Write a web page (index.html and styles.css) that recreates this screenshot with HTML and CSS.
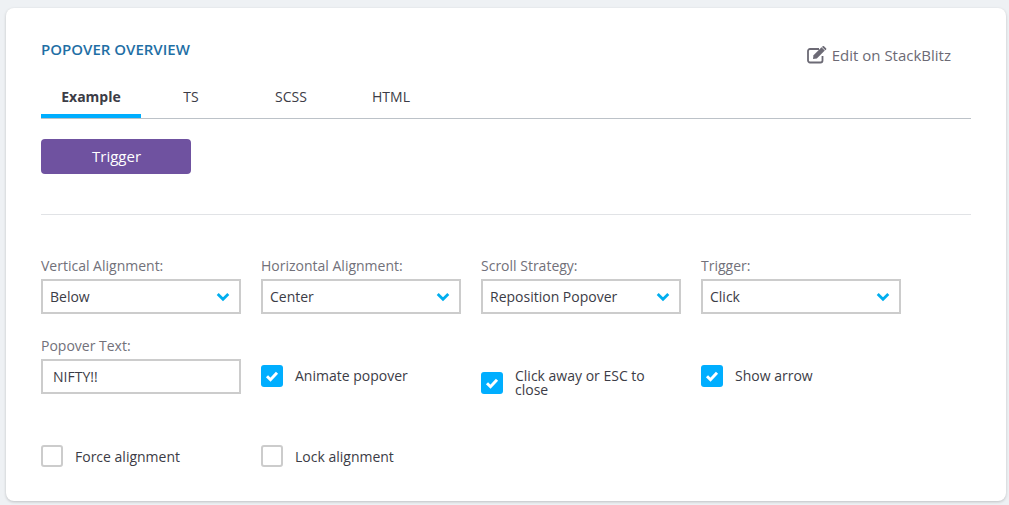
FILE: index.html
```html
<!DOCTYPE html>
<html lang="en">
<head>
<meta charset="utf-8">
<title>Popover Overview</title>
<link rel="stylesheet" href="styles.css">
</head>
<body>
<main class="card">
  <header class="head">
    <h2 class="title">POPOVER OVERVIEW</h2>
    <a class="edit">
      <svg class="edit-icon" viewBox="0 0 20 18" width="20" height="18" aria-hidden="true">
        <path d="M15.500 10V14.500a2 2 0 0 1-2 2H3a2 2 0 0 1-2-2V5a2 2 0 0 1 2-2h9" fill="none" stroke="#6c6a75" stroke-width="1.800"/>
        <path d="M6.500 9.200 14.500 1.200l3.300 3.300-8 8-3.800.500z" fill="#6c6a75"/>
        <path d="M15.600.3a1 1 0 0 1 1.400 0l2 2a1 1 0 0 1 0 1.400l-.6.600-3.400-3.400z" fill="#6c6a75"/>
      </svg>
      <span>Edit on StackBlitz</span>
    </a>
  </header>

  <nav class="tabs">
    <span class="tab active">Example</span>
    <span class="tab">TS</span>
    <span class="tab">SCSS</span>
    <span class="tab">HTML</span>
  </nav>

  <section class="demo">
    <button class="trigger" type="button">Trigger</button>
  </section>

  <section class="form">
    <div class="field">
      <label class="label">Vertical Alignment:</label>
      <div class="select">Below<svg class="chev" viewBox="0 0 14 10" width="14" height="10" aria-hidden="true"><path d="M1.700 2 7 7.300 12.300 2" fill="none" stroke="#00aeef" stroke-width="2.800"/></svg></div>
    </div>
    <div class="field">
      <label class="label">Horizontal Alignment:</label>
      <div class="select">Center<svg class="chev" viewBox="0 0 14 10" width="14" height="10" aria-hidden="true"><path d="M1.700 2 7 7.300 12.300 2" fill="none" stroke="#00aeef" stroke-width="2.800"/></svg></div>
    </div>
    <div class="field">
      <label class="label">Scroll Strategy:</label>
      <div class="select">Reposition Popover<svg class="chev" viewBox="0 0 14 10" width="14" height="10" aria-hidden="true"><path d="M1.700 2 7 7.300 12.300 2" fill="none" stroke="#00aeef" stroke-width="2.800"/></svg></div>
    </div>
    <div class="field">
      <label class="label">Trigger:</label>
      <div class="select">Click<svg class="chev" viewBox="0 0 14 10" width="14" height="10" aria-hidden="true"><path d="M1.700 2 7 7.300 12.300 2" fill="none" stroke="#00aeef" stroke-width="2.800"/></svg></div>
    </div>

    <div class="field">
      <label class="label">Popover Text:</label>
      <div class="input">NIFTY!!</div>
    </div>
    <div class="check-cell">
      <div class="check"><span class="box on"><svg viewBox="0 0 22 22" width="22" height="22" aria-hidden="true"><path d="M6 11.200 9.500 14.700 16 7.700" fill="none" stroke="#fff" stroke-width="3"/></svg></span><span class="check-text">Animate popover</span></div>
    </div>
    <div class="check-cell">
      <div class="check low"><span class="box on"><svg viewBox="0 0 22 22" width="22" height="22" aria-hidden="true"><path d="M6 11.200 9.500 14.700 16 7.700" fill="none" stroke="#fff" stroke-width="3"/></svg></span><span class="check-text">Click away or ESC to close</span></div>
    </div>
    <div class="check-cell">
      <div class="check"><span class="box on"><svg viewBox="0 0 22 22" width="22" height="22" aria-hidden="true"><path d="M6 11.200 9.500 14.700 16 7.700" fill="none" stroke="#fff" stroke-width="3"/></svg></span><span class="check-text">Show arrow</span></div>
    </div>

    <div class="check plain"><span class="box"></span><span class="check-text">Force alignment</span></div>
    <div class="check plain"><span class="box"></span><span class="check-text">Lock alignment</span></div>
  </section>
</main>
</body>
</html>
```

FILE: styles.css
```css
* { box-sizing: border-box; }

html, body { height: 100%; }

body {
  margin: 0;
  padding: 8px 3px 4px 6px;
  background: #eef1f4;
  font-family: "Open Sans", sans-serif;
  font-size: 14px;
  color: #3c3c46;
  overflow: hidden;
}

.card {
  width: 1000px;
  height: 493px;
  padding: 32px 35px 0;
  background: #fff;
  border-radius: 8px;
  box-shadow: 0 1px 3px rgba(0, 0, 0, 0.2);
}

.head {
  display: flex;
  justify-content: space-between;
  align-items: flex-start;
  height: 40px;
}

.title {
  margin: 0;
  font-size: 15px;
  line-height: 18px;
  font-weight: 600;
  color: #1f6fa5;
}

.edit {
  display: flex;
  align-items: center;
  gap: 5px;
  margin: 5px 20px 0 0;
  line-height: 20px;
  font-size: 15px;
  color: #6c6a75;
}

.edit-icon { display: block; }

.tabs {
  display: flex;
  height: 39px;
  border-bottom: 1px solid #bcc2c8;
}

.tab {
  width: 100px;
  height: 38px;
  padding-top: 7px;
  text-align: center;
  line-height: 20px;
  font-size: 14px;
}

.tab.active {
  font-weight: 700;
  border-bottom: 4px solid #00aeff;
}

.demo {
  height: 96px;
  padding-top: 20px;
  border-bottom: 1px solid #e1e3e6;
}

.trigger {
  display: block;
  width: 150px;
  height: 35px;
  padding: 0 0 0 1px;
  border: 0;
  border-radius: 4px;
  background: #6f52a0;
  color: #fff;
  font: 15px/35px "Open Sans", sans-serif;
}

.form {
  display: grid;
  grid-template-columns: repeat(4, 200px);
  grid-template-rows: 80px 109px auto;
  column-gap: 20px;
  row-gap: 0;
  padding-top: 41px;
}

.field { display: flex; flex-direction: column; }

.label {
  height: 23px;
  line-height: 19px;
  font-size: 14px;
  color: #72717a;
}

.select, .input {
  height: 35px;
  border: 2px solid #cccccc;
  font-size: 14px;
  line-height: 31px;
}

.select {
  display: flex;
  justify-content: space-between;
  align-items: center;
  padding: 0 9px 0 7px;
}

.input { padding-left: 10px; }

.check-cell { padding-top: 29px; }

.check {
  display: flex;
  align-items: center;
  gap: 12px;
  height: 22px;
}

.check.low { margin-top: 7px; }

.check.plain .check-text { padding-top: 2px; }

.box {
  flex: none;
  width: 22px;
  height: 22px;
  border: 2px solid #cccccc;
  border-radius: 3px;
  background: #fff;
}

.box.on {
  border: 0;
  background: #00aeff;
}

.box svg { display: block; }

.check-text {
  line-height: 14px;
  font-size: 14px;
}
```
